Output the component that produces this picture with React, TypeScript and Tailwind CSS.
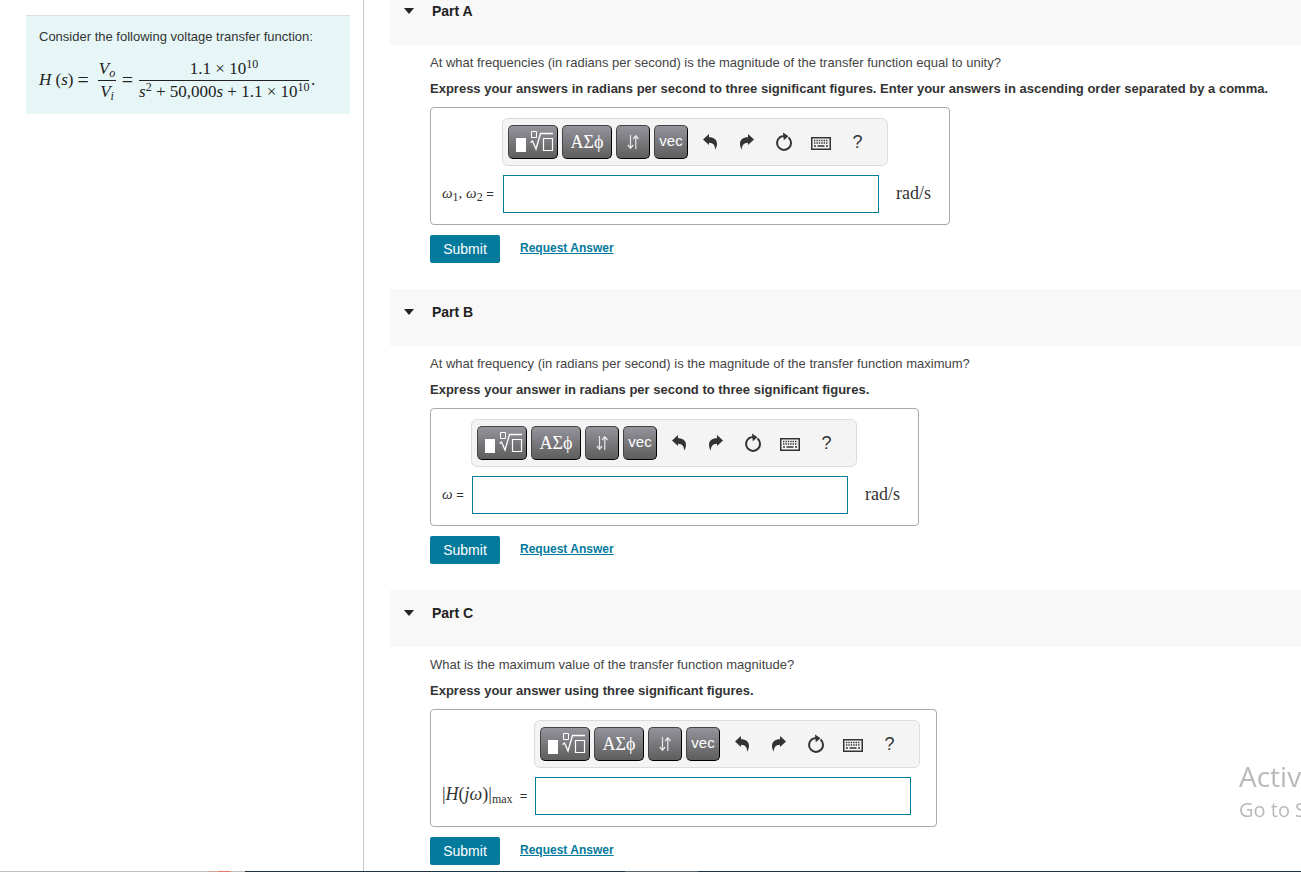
import { ReactNode } from "react";

type Part = {
    id: string;
    title: string;
    question: string;
    hint: string;
    label: ReactNode;
    labelWidth: string;
    unit?: string;
};

const PARTS: Part[] = [
    {
        id: "a",
        title: "Part A",
        question: "At what frequencies (in radians per second) is the magnitude of the transfer function equal to unity?",
        hint: "Express your answers in radians per second to three significant figures. Enter your answers in ascending order separated by a comma.",
        label: (
            <>
                <MathText size="text-[15px]"><i>ω</i><Sub>1</Sub>, <i>ω</i><Sub>2</Sub></MathText> =
            </>
        ),
        labelWidth: "w-[60px]",
        unit: "rad/s",
    },
    {
        id: "b",
        title: "Part B",
        question: "At what frequency (in radians per second) is the magnitude of the transfer function maximum?",
        hint: "Express your answer in radians per second to three significant figures.",
        label: (
            <>
                <MathText size="text-[15px]"><i>ω</i></MathText> =
            </>
        ),
        labelWidth: "w-[29px]",
        unit: "rad/s",
    },
    {
        id: "c",
        title: "Part C",
        question: "What is the maximum value of the transfer function magnitude?",
        hint: "Express your answer using three significant figures.",
        label: (
            <>
                <MathText size="text-[18px]">|<i>H</i>(<i>jω</i>)|<Sub>max</Sub></MathText>&nbsp; =
            </>
        ),
        labelWidth: "w-[92px]",
    },
];

export default function App() {
    return (
        <div className="flex min-h-screen bg-white font-['Liberation_Sans',Arial,sans-serif] text-[13px] text-[#333]">

            {/* PROBLEM */}
            <aside className="w-[364px] shrink-0 border-r border-[#c0c8d4] pt-[15px] pl-[26px] pr-[13px]">
                <div className="border-t border-[#d6e0e0] bg-[#e6f6f7] pt-3 pb-[11px] pl-[13px]">
                    <p className="leading-[18px]">Consider the following voltage transfer function:</p>
                    <TransferFunction />
                </div>
            </aside>

            {/* PARTS */}
            <main className="min-w-0 flex-1 overflow-hidden pl-[26px]">
                <div className="-mt-3">
                    {PARTS.map((p) => (
                        <PartSection key={p.id} part={p} />
                    ))}
                </div>
            </main>

            {/* WINDOWS NOTICE */}
            <div className="pointer-events-none fixed right-0 bottom-[46px] w-[62px] overflow-hidden whitespace-nowrap font-['Open_Sans','Noto_Sans',sans-serif] text-[#b9b9b9]">
                <p className="text-[28px] leading-[36px]">Activ</p>
                <p className="text-[20px] leading-[32px]">Go to S</p>
            </div>

            {/* TASKBAR EDGE */}
            <div className="fixed inset-x-0 bottom-0 flex h-px">
                <div className="w-[209px] bg-[#c0c0c0]" />
                <div className="w-[9px] bg-[#d0a890]" />
                <div className="w-[13px] bg-[#e87868]" />
                <div className="w-[14px] bg-[#c0c0c0]" />
                <div className="w-[380px] bg-[#1f3440]" />
                <div className="w-[73px] bg-[#5a6670]" />
                <div className="flex-1 bg-[#1f3440]" />
            </div>
        </div>
    );
}

/* ---------- MATH ---------- */

function MathText({ size, children }: { size: string; children: ReactNode }) {
    return (
        <span className={`font-['Liberation_Serif',serif] leading-none ${size}`}>{children}</span>
    );
}

function Sub({ children }: { children: ReactNode }) {
    return <sub className="text-[12px]">{children}</sub>;
}

function Sup({ children }: { children: ReactNode }) {
    return <sup className="text-[12px] leading-none">{children}</sup>;
}

function Fraction({ top, bottom, width }: { top: ReactNode; bottom: ReactNode; width: string }) {
    return (
        <span className={`flex flex-col text-center ${width}`}>
            <span className="h-6 border-b border-[#222] leading-[24px]">{top}</span>
            <span className="h-[22px] leading-[22px]">{bottom}</span>
        </span>
    );
}

function TransferFunction() {
    return (
        <div className="mt-[11px] flex items-center whitespace-nowrap font-['Liberation_Serif',serif] text-[17px] text-[#222]">
            <span className="flex w-[59px] items-center gap-1 leading-[20px]">
                <span><i>H</i> (<i>s</i>)</span>
                <span className="text-[20px]">=</span>
            </span>
            <Fraction width="w-[18px]" top={<><i>V</i><Sub><i>o</i></Sub></>} bottom={<><i>V</i><Sub><i>i</i></Sub></>} />
            <span className="w-[23px] text-center text-[20px] leading-[20px]">=</span>
            <Fraction
                width="w-[170px]"
                top={<>1.1 × 10<Sup>10</Sup></>}
                bottom={<><i>s</i><Sup>2</Sup> + 50,000<i>s</i> + 1.1 × 10<Sup>10</Sup></>}
            />
            <span className="pl-[2px]">.</span>
        </div>
    );
}

/* ---------- COMPONENTS ---------- */

function PartSection({ part }: { part: Part }) {
    return (
        <section>
            <header className="h-[57px] bg-[#f8f8f8] pt-[14px] pl-[14px]">
                <button className="flex h-[18px] items-center gap-[18px] text-[14px] font-bold text-[#222]">
                    <svg width="10" height="6" viewBox="0 0 10 6" fill="currentColor"><path d="M0 0h10L5 6z" /></svg>
                    {part.title}
                </button>
            </header>

            <div className="pt-[9px] pb-[26px] pl-10">
                <p className="leading-[18px] text-[#444]">{part.question}</p>
                <p className="mt-2 leading-[18px] font-bold">{part.hint}</p>

                <div className="mt-[9px] flex w-fit rounded-[4px] border border-[#a9a9a9] pt-[10px] pr-4 pb-[11px] pl-[11px]">
                    <label htmlFor={part.id} className={`flex shrink-0 items-end whitespace-nowrap ${part.labelWidth}`}>
                        <span className="h-[38px] leading-[38px]">{part.label}</span>
                    </label>
                    <div>
                        <Toolbar />
                        <input
                            id={part.id}
                            type="text"
                            className="mt-[9px] ml-px block h-[38px] w-[376px] border border-[#007d9c] bg-white px-2 outline-none"
                        />
                    </div>
                    {part.unit && (
                        <span className="flex w-[45px] items-end pl-2">
                            <span className="font-['Liberation_Serif',serif] text-[18px] leading-[40px]">{part.unit}</span>
                        </span>
                    )}
                </div>

                <div className="mt-[10px] flex h-7 items-center gap-5">
                    <button className="h-7 w-[70px] rounded-[2px] bg-[#047a9c] text-[14px] text-white">Submit</button>
                    <a href="#" className="pb-[3px] text-[12px] font-bold text-[#047a9c] underline">Request Answer</a>
                </div>
            </div>
        </section>
    );
}

const DARK = "flex h-[34px] items-center justify-center rounded-[5px] border border-[#444] border-r-black border-b-black bg-linear-to-b from-[#94949c] to-[#5e5e5e] text-white";
const PLAIN = "flex h-[34px] w-[37px] items-center justify-center text-[#333]";

function Toolbar() {
    return (
        <div role="toolbar" className="flex h-12 w-[386px] items-center rounded-[6px] border border-[#dcdcdc] bg-[#f4f4f4] pl-[5px]">
            <div className="mr-[3px] flex gap-1">
                <button aria-label="Templates" className={`${DARK} w-[50px]`}>
                    <svg width="48" height="32" viewBox="1 1 48 32" fill="none" stroke="white">
                        <path d="M8 13h10v14H8z" fill="white" stroke="none" />
                        <path d="M23.5 6.5h5v6h-5z" strokeWidth="1" />
                        <path d="M22.5 17.5l2-1.5 3.5 8L32.5 8.5H45" strokeWidth="1.3" />
                        <path d="M35.5 13.5h9v12h-9z" strokeWidth="1.2" />
                    </svg>
                </button>
                <button aria-label="Symbols" className={`${DARK} w-[50px] font-['Liberation_Serif',serif] text-[18px]`}>ΑΣϕ</button>
                <button aria-label="Layout" className={`${DARK} w-[34px]`}>
                    <svg width="12" height="16" viewBox="0 0 12 16" fill="none" stroke="#e8e8e8" strokeWidth="1.2">
                        <path d="M3.5 1v13M.8 11l2.7 3.2L6.2 11M8.8 15V2M6.1 5l2.7-3.2L11.5 5" />
                    </svg>
                </button>
                <button className={`${DARK} w-[34px] pb-[2px] text-[15px]`}>vec</button>
            </div>
            <button aria-label="Undo" className={PLAIN}>
                <svg width="14" height="16" viewBox="0 0 14 16" fill="currentColor">
                    <path d="M0 5.5L6 0v3.3c5 0 8 2.4 8 6.7 0 2-.8 4.2-2 5.7.4-4-1.5-7-6-7V11z" />
                </svg>
            </button>
            <button aria-label="Redo" className={PLAIN}>
                <svg width="14" height="16" viewBox="0 0 14 16" fill="currentColor">
                    <path d="M14 5.5L8 0v3.3c-5 0-8 2.4-8 6.7 0 2 .8 4.2 2 5.7-.4-4 1.5-7 6-7V11z" />
                </svg>
            </button>
            <button aria-label="Reset" className={PLAIN}>
                <svg width="18" height="20" viewBox="0 0 18 20" fill="none" stroke="currentColor" strokeWidth="2">
                    <path d="M5 5.2A7 7 0 1 0 13.5 5.5" />
                    <path d="M4.5 5.5C6 4.3 7.500 4 10 4" />
                    <path d="M8 .5l5.5 3.7L8.8 8.3z" fill="currentColor" stroke="none" />
                </svg>
            </button>
            <button aria-label="Keyboard" className={`${PLAIN} pt-[3px]`}>
                <svg width="20" height="13" viewBox="0 0 20 13" fill="none" stroke="currentColor">
                    <rect x=".75" y=".75" width="18.5" height="11.5" strokeWidth="1.5" />
                    <path d="M3 3.5h14.5M3 6h14.5" strokeWidth="1.4" strokeDasharray="1.4 1" />
                    <path d="M3 9h2M6.5 9h7M15 9h2" strokeWidth="1.5" />
                </svg>
            </button>
            <button aria-label="Help" className={`${PLAIN} text-[18px]`}>?</button>
        </div>
    );
}
